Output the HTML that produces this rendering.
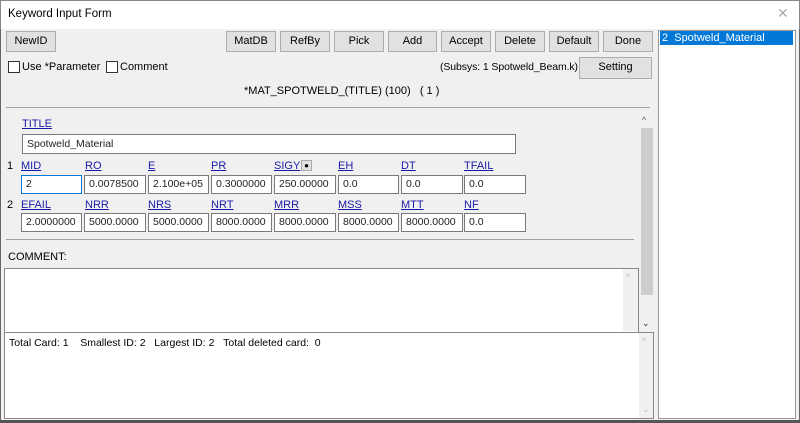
<!DOCTYPE html>
<html><head><style>
*{margin:0;padding:0;box-sizing:border-box}
body{width:800px;height:423px;background:#f0f0f0;font-family:"Liberation Sans",sans-serif;font-size:11px;color:#000;position:relative;overflow:hidden}
.a{position:absolute}
.btn{position:absolute;background:#e1e1e1;border:1px solid #adadad;text-align:center;line-height:19px;height:21px}
.in{position:absolute;background:#fff;border:1px solid #7a7a7a;height:19px;line-height:17px;padding-left:4px;font-size:10.5px;color:#222}
.lb{position:absolute;color:#1a1aa6;text-decoration:underline;font-size:11px}
.cb{position:absolute;width:12px;height:12px;border:1px solid #333;background:#fff}
</style></head><body>
<div class="a" style="left:0;top:0;width:800px;height:29px;background:#fff;border:1px solid #888;border-bottom:none"></div>
<div class="a" style="left:8px;top:8px;font-size:11.5px">Keyword Input Form</div>
<div class="a" style="left:777px;top:5px;font-size:14px;color:#aaa">✕</div>
<div class="a" style="left:0;top:29px;width:1px;height:394px;background:#666"></div>
<div class="a" style="left:799px;top:29px;width:1px;height:394px;background:#666"></div>

<div class="btn" style="left:6px;top:31px;width:50px">NewID</div>
<div class="btn" style="left:226px;top:31px;width:50px">MatDB</div>
<div class="btn" style="left:280px;top:31px;width:50px">RefBy</div>
<div class="btn" style="left:334px;top:31px;width:50px">Pick</div>
<div class="btn" style="left:388px;top:31px;width:49px">Add</div>
<div class="btn" style="left:441px;top:31px;width:50px">Accept</div>
<div class="btn" style="left:495px;top:31px;width:50px">Delete</div>
<div class="btn" style="left:549px;top:31px;width:50px">Default</div>
<div class="btn" style="left:603px;top:31px;width:50px">Done</div>

<div class="cb" style="left:8px;top:61px"></div><div class="a" style="left:22px;top:61px">Use *Parameter</div>
<div class="cb" style="left:106px;top:61px"></div><div class="a" style="left:120px;top:61px">Comment</div>
<div class="a" style="left:440px;top:61px;font-size:10.5px;letter-spacing:-0.1px">(Subsys: 1 Spotweld_Beam.k)</div>
<div class="btn" style="left:579px;top:57px;width:73px;height:22px">Setting</div>
<div class="a" style="left:244px;top:85px">*MAT_SPOTWELD_(TITLE) (100) &nbsp;&nbsp;( 1 )</div>
<div class="a" style="left:6px;top:107px;width:644px;height:1px;background:#a0a0a0"></div>

<div class="a" style="left:658px;top:30px;width:138px;height:389px;background:#fff;border:1px solid #999"></div>
<div class="a" style="left:660px;top:31px;width:133px;height:14px;background:#0078d7;color:#fff;line-height:14px;padding-left:2px">2 &nbsp;Spotweld_Material</div>

<div class="a" style="left:640px;top:115px;width:14px;height:216px;background:#f0f0f0"></div>
<div class="a" style="left:641px;top:128px;width:12px;height:167px;background:#cdcdcd"></div>
<div class="a" style="left:642px;top:115px;font-size:9px;color:#555">^</div>
<div class="a" style="left:642px;top:318px;font-size:9px;color:#333">⌄</div>

<div class="lb" style="left:22px;top:118px">TITLE</div>
<div class="in" style="left:22px;top:134px;width:494px;height:20px;line-height:18px">Spotweld_Material</div>

<div class="a" style="left:7px;top:160px">1</div>
<div class="lb" style="left:21px;top:160px">MID</div>
<div class="lb" style="left:85px;top:160px">RO</div>
<div class="lb" style="left:148px;top:160px">E</div>
<div class="lb" style="left:211px;top:160px">PR</div>
<div class="lb" style="left:274px;top:160px">SIGY</div>
<div class="a" style="left:301px;top:160px;width:11px;height:11px;background:#e1e1e1;border:1px solid #aaa;font-size:8px;text-align:center;line-height:9px">●</div>
<div class="lb" style="left:338px;top:160px">EH</div>
<div class="lb" style="left:401px;top:160px">DT</div>
<div class="lb" style="left:464px;top:160px">TFAIL</div>
<div class="in" style="left:21px;top:175px;width:61px;border-color:#0078d7">2</div>
<div class="in" style="left:84px;top:175px;width:62px">0.0078500</div>
<div class="in" style="left:148px;top:175px;width:61px">2.100e+05</div>
<div class="in" style="left:211px;top:175px;width:61px">0.3000000</div>
<div class="in" style="left:274px;top:175px;width:62px">250.00000</div>
<div class="in" style="left:338px;top:175px;width:61px">0.0</div>
<div class="in" style="left:401px;top:175px;width:62px">0.0</div>
<div class="in" style="left:464px;top:175px;width:62px">0.0</div>

<div class="a" style="left:7px;top:199px">2</div>
<div class="lb" style="left:21px;top:199px">EFAIL</div>
<div class="lb" style="left:85px;top:199px">NRR</div>
<div class="lb" style="left:148px;top:199px">NRS</div>
<div class="lb" style="left:211px;top:199px">NRT</div>
<div class="lb" style="left:274px;top:199px">MRR</div>
<div class="lb" style="left:338px;top:199px">MSS</div>
<div class="lb" style="left:401px;top:199px">MTT</div>
<div class="lb" style="left:464px;top:199px">NF</div>
<div class="in" style="left:21px;top:213px;width:61px">2.0000000</div>
<div class="in" style="left:84px;top:213px;width:62px">5000.0000</div>
<div class="in" style="left:148px;top:213px;width:61px">5000.0000</div>
<div class="in" style="left:211px;top:213px;width:61px">8000.0000</div>
<div class="in" style="left:274px;top:213px;width:62px">8000.0000</div>
<div class="in" style="left:338px;top:213px;width:61px">8000.0000</div>
<div class="in" style="left:401px;top:213px;width:62px">8000.0000</div>
<div class="in" style="left:464px;top:213px;width:62px">0.0</div>

<div class="a" style="left:6px;top:239px;width:628px;height:1px;background:#a0a0a0"></div>
<div class="a" style="left:8px;top:251px">COMMENT:</div>
<div class="a" style="left:4px;top:268px;width:635px;height:64px;background:#fff;border:1px solid #888;border-bottom:none"></div>
<div class="a" style="left:623px;top:269px;width:15px;height:62px;background:#f0f0f0"></div>
<div class="a" style="left:626px;top:272px;font-size:9px;color:#bbb">^</div>

<div class="a" style="left:4px;top:332px;width:650px;height:87px;background:#fff;border:1px solid #888"></div>
<div class="a" style="left:639px;top:333px;width:14px;height:85px;background:#f0f0f0"></div>
<div class="a" style="left:642px;top:336px;font-size:9px;color:#bbb">^</div>
<div class="a" style="left:642px;top:404px;font-size:9px;color:#bbb">⌄</div>
<div class="a" style="left:9px;top:337px;font-size:10.5px">Total Card: 1 &nbsp;&nbsp;&nbsp;Smallest ID: 2 &nbsp;&nbsp;Largest ID: 2 &nbsp;&nbsp;Total deleted card: &nbsp;0</div>
<div class="a" style="left:0;top:420px;width:800px;height:3px;background:#555"></div>
</body></html>
